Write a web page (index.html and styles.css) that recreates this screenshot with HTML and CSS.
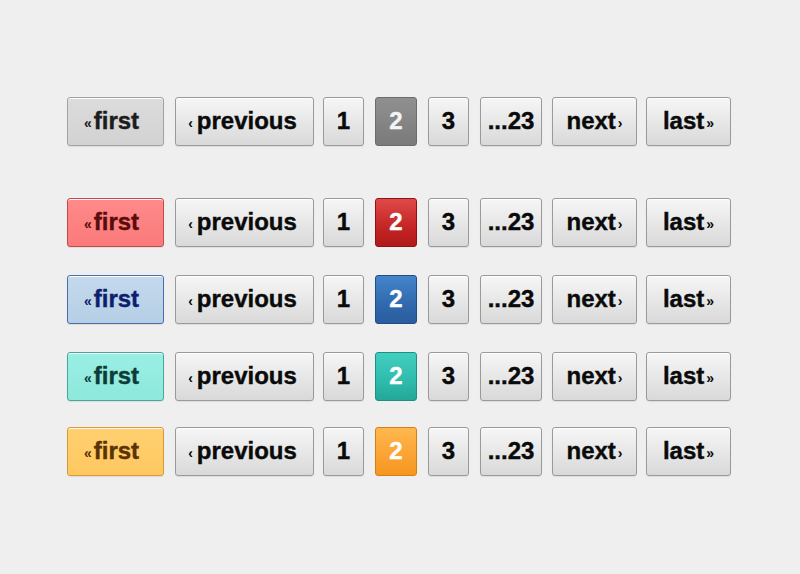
FILE: index.html
```html
<!DOCTYPE html>
<html lang="en">
<head>
<meta charset="utf-8">
<title>Pagination styles</title>
<link rel="stylesheet" href="styles.css">
</head>
<body>
<main class="sheet">
  <nav class="pager pager-grey">
    <a class="btn btn-first"><span class="arr">«</span>first</a>
    <a class="btn btn-prev"><span class="arr">‹</span>previous</a>
    <a class="btn btn-1">1</a>
    <a class="btn btn-2 current">2</a>
    <a class="btn btn-3">3</a>
    <a class="btn btn-more">...23</a>
    <a class="btn btn-next">next<span class="arr">›</span></a>
    <a class="btn btn-last">last<span class="arr">»</span></a>
  </nav>
  <nav class="pager pager-red">
    <a class="btn btn-first"><span class="arr">«</span>first</a>
    <a class="btn btn-prev"><span class="arr">‹</span>previous</a>
    <a class="btn btn-1">1</a>
    <a class="btn btn-2 current">2</a>
    <a class="btn btn-3">3</a>
    <a class="btn btn-more">...23</a>
    <a class="btn btn-next">next<span class="arr">›</span></a>
    <a class="btn btn-last">last<span class="arr">»</span></a>
  </nav>
  <nav class="pager pager-blue">
    <a class="btn btn-first"><span class="arr">«</span>first</a>
    <a class="btn btn-prev"><span class="arr">‹</span>previous</a>
    <a class="btn btn-1">1</a>
    <a class="btn btn-2 current">2</a>
    <a class="btn btn-3">3</a>
    <a class="btn btn-more">...23</a>
    <a class="btn btn-next">next<span class="arr">›</span></a>
    <a class="btn btn-last">last<span class="arr">»</span></a>
  </nav>
  <nav class="pager pager-teal">
    <a class="btn btn-first"><span class="arr">«</span>first</a>
    <a class="btn btn-prev"><span class="arr">‹</span>previous</a>
    <a class="btn btn-1">1</a>
    <a class="btn btn-2 current">2</a>
    <a class="btn btn-3">3</a>
    <a class="btn btn-more">...23</a>
    <a class="btn btn-next">next<span class="arr">›</span></a>
    <a class="btn btn-last">last<span class="arr">»</span></a>
  </nav>
  <nav class="pager pager-orange">
    <a class="btn btn-first"><span class="arr">«</span>first</a>
    <a class="btn btn-prev"><span class="arr">‹</span>previous</a>
    <a class="btn btn-1">1</a>
    <a class="btn btn-2 current">2</a>
    <a class="btn btn-3">3</a>
    <a class="btn btn-more">...23</a>
    <a class="btn btn-next">next<span class="arr">›</span></a>
    <a class="btn btn-last">last<span class="arr">»</span></a>
  </nav>
</main>
</body>
</html>
```

FILE: styles.css
```css
html, body {
  margin: 0;
  padding: 0;
  background: #efefef;
  height: 100%;
}

.sheet {
  padding: 97px 0 0 67px;
  display: flex;
  flex-direction: column;
  gap: 28px;
}

.pager-grey {
  margin-bottom: 24px;
}
.pager-orange {
  margin-top: -2px;
}

.pager {
  display: flex;
  align-items: center;
  height: 49px;
}

.btn {
  box-sizing: border-box;
  height: 49px;
  display: flex;
  align-items: center;
  justify-content: center;
  font-family: "Liberation Sans", Arial, sans-serif;
  font-weight: bold;
  font-size: 24px;
  color: #0a0a0a;
  -webkit-text-stroke: 0.4px currentColor;
  border: 1px solid #9a9a9a;
  border-radius: 3px;
  background: linear-gradient(#f6f6f6, #e6e6e6 55%, #d9d9d9);
  box-shadow: inset 0 1px 0 rgba(255, 255, 255, 0.9), 0 1px 1px rgba(0, 0, 0, 0.08);
  text-decoration: none;
  padding-bottom: 1px;
}

.arr {
  font-size: 14px;
  -webkit-text-stroke: 0;
  padding-top: 3px;
}
.btn-first .arr {
  margin-right: 2px;
}
.btn-prev .arr {
  margin-right: 4px;
}
.btn-next .arr,
.btn-last .arr {
  margin-left: 2px;
}

.btn-first { width: 97px; padding-right: 8px; }
.btn-prev  { width: 139px; margin-left: 11px; padding-right: 4px; }
.btn-1     { width: 41px;  margin-left: 9px; }
.btn-2     { width: 42px;  margin-left: 11px; }
.btn-3     { width: 41px;  margin-left: 11px; }
.btn-more  { width: 62px;  margin-left: 11px; }
.btn-next  { width: 85px;  margin-left: 10px; }
.btn-last  { width: 85px;  margin-left: 9px; }

.current {
  color: #fff;
  box-shadow: none;
}

/* grey scheme */
.pager-grey .btn-first {
  background: linear-gradient(#dcdcdc, #d2d2d2);
  border-color: #a2a2a2;
  color: #1c1c1c;
}
.pager-grey .current {
  background: linear-gradient(#909090, #7a7a7a);
  border-color: #6c6c6c;
  color: #f4f4f4;
}

/* red scheme */
.pager-red .btn-first {
  background: linear-gradient(#ff8a8a, #fb7a7a);
  border-color: #c24a4a;
  color: #5a0c0c;
}
.pager-red .current {
  background: linear-gradient(#e04a4a, #c42424 60%, #b01a1a);
  border-color: #8e1414;
}

/* blue scheme */
.pager-blue .btn-first {
  background: linear-gradient(#c4d9ec, #b6cfe6);
  border-color: #4a6ea8;
  color: #0d1f6e;
}
.pager-blue .current {
  background: linear-gradient(#4585cb, #3069ad 60%, #2a5d9e);
  border-color: #214c86;
}

/* teal scheme */
.pager-teal .btn-first {
  background: linear-gradient(#9aefe4, #8ee8dc);
  border-color: #44a89c;
  color: #0d3c38;
}
.pager-teal .current {
  background: linear-gradient(#43cfc0, #2ebbac 60%, #24a797);
  border-color: #1f8f83;
}

/* orange scheme */
.pager-orange .btn-first {
  background: linear-gradient(#ffd070, #ffc860);
  border-color: #d79a38;
  color: #5a3205;
}
.pager-orange .current {
  background: linear-gradient(#ffb84e, #fba233 60%, #f5961e);
  border-color: #d47f12;
}
```
